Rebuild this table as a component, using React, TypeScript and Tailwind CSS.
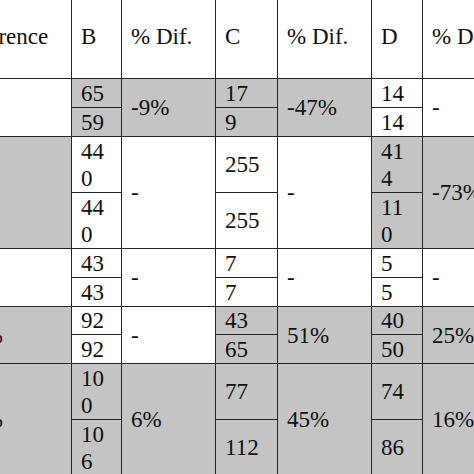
import React from "react";

const G = "bg-[#c4c4c4]";
const W = "bg-white";

type Sub = { t: string; g: boolean };
type Row = {
  ref: { t: string; g: boolean };
  b: [Sub, Sub];
  bd: Sub;
  c: [Sub, Sub];
  cd: Sub;
  d: [Sub, Sub];
  dd: Sub;
  h: [string, string];
};

const rows: Row[] = [
  {
    ref: { t: "-", g: false },
    b: [{ t: "65", g: true }, { t: "59", g: true }],
    bd: { t: "-9%", g: true },
    c: [{ t: "17", g: true }, { t: "9", g: true }],
    cd: { t: "-47%", g: true },
    d: [{ t: "14", g: false }, { t: "14", g: false }],
    dd: { t: "-", g: false },
    h: ["h-[28px]", "h-[28px]"],
  },
  {
    ref: { t: "-", g: true },
    b: [{ t: "440", g: false }, { t: "440", g: false }],
    bd: { t: "-", g: false },
    c: [{ t: "255", g: false }, { t: "255", g: false }],
    cd: { t: "-", g: false },
    d: [{ t: "414", g: true }, { t: "110", g: true }],
    dd: { t: "-73%", g: true },
    h: ["h-[55px]", "h-[55px]"],
  },
  {
    ref: { t: "-", g: false },
    b: [{ t: "43", g: false }, { t: "43", g: false }],
    bd: { t: "-", g: false },
    c: [{ t: "7", g: false }, { t: "7", g: false }],
    cd: { t: "-", g: false },
    d: [{ t: "5", g: false }, { t: "5", g: false }],
    dd: { t: "-", g: false },
    h: ["h-[28px]", "h-[28px]"],
  },
  {
    ref: { t: "-12%", g: true },
    b: [{ t: "92", g: false }, { t: "92", g: false }],
    bd: { t: "-", g: false },
    c: [{ t: "43", g: true }, { t: "65", g: true }],
    cd: { t: "51%", g: true },
    d: [{ t: "40", g: true }, { t: "50", g: true }],
    dd: { t: "25%", g: true },
    h: ["h-[27px]", "h-[28px]"],
  },
  {
    ref: { t: "-12%", g: true },
    b: [{ t: "100", g: true }, { t: "106", g: true }],
    bd: { t: "6%", g: true },
    c: [{ t: "77", g: true }, { t: "112", g: true }],
    cd: { t: "45%", g: true },
    d: [{ t: "74", g: true }, { t: "86", g: true }],
    dd: { t: "16%", g: true },
    h: ["h-[55px]", "h-[55px]"],
  },
];

function Cell({ t, g, cls }: { t: string; g: boolean; cls: string }) {
  return (
    <div className={`${g ? G : W} ${cls} flex items-center px-[9px] break-all`}>
      <span>{t}</span>
    </div>
  );
}

function Pair({ s, h, w }: { s: [Sub, Sub]; h: [string, string]; w: string }) {
  return (
    <div className={`flex flex-col gap-px ${w}`}>
      <Cell t={s[0].t} g={s[0].g} cls={h[0]} />
      <Cell t={s[1].t} g={s[1].g} cls={h[1]} />
    </div>
  );
}

export default function App() {
  return (
    <div className="w-[474px] h-[474px] overflow-hidden bg-white">
      <div className="ml-[-54px] mt-[-6px] w-[577px] flex flex-col gap-px bg-[#262626] text-[23px] leading-[27px] text-[#101010] font-['Liberation_Serif','Times_New_Roman',serif]">
        <div className="flex gap-px h-[84px]">
          <Cell t="Reference" g={false} cls="w-[125px]" />
          <Cell t="B" g={false} cls="w-[49px]" />
          <Cell t="% Dif." g={false} cls="w-[93px]" />
          <Cell t="C" g={false} cls="w-[61px]" />
          <Cell t="% Dif." g={false} cls="w-[93px]" />
          <Cell t="D" g={false} cls="w-[50px]" />
          <Cell t="% Dif." g={false} cls="w-[100px]" />
        </div>
        {rows.map((r, i) => (
          <div key={i} className="flex gap-px">
            <Cell t={r.ref.t} g={r.ref.g} cls="w-[125px] pl-[7px]" />
            <Pair s={r.b} h={r.h} w="w-[49px]" />
            <Cell t={r.bd.t} g={r.bd.g} cls="w-[93px]" />
            <Pair s={r.c} h={r.h} w="w-[61px]" />
            <Cell t={r.cd.t} g={r.cd.g} cls="w-[93px]" />
            <Pair s={r.d} h={r.h} w="w-[50px]" />
            <Cell t={r.dd.t} g={r.dd.g} cls="w-[100px]" />
          </div>
        ))}
      </div>
    </div>
  );
}
